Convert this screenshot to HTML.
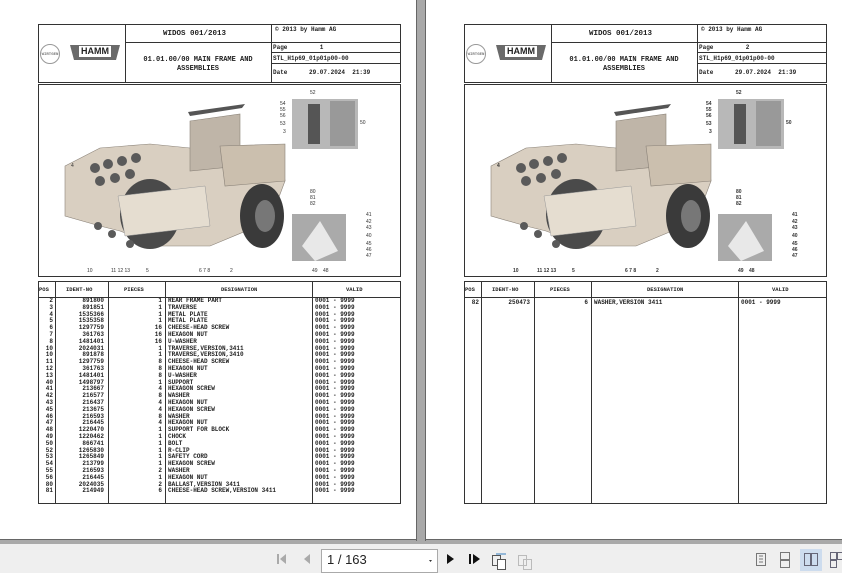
<!DOCTYPE html>
<html><head><meta charset="utf-8"><style>
*{margin:0;padding:0;box-sizing:border-box}
body{width:842px;height:573px;overflow:hidden;background:#a9a9a9;position:relative;font-family:"Liberation Mono",monospace;font-weight:bold;color:#222}
.page{position:absolute;top:0;width:417px;height:540px;background:#fff;border-bottom:1px solid #666}
.b{position:absolute;border:1px solid #333}
.t{position:absolute;font-size:7px;white-space:pre;line-height:8px}
.rows{position:absolute;top:298px;font-size:6px;line-height:6.8px;white-space:pre}
.tb{position:absolute;left:0;top:544px;width:842px;height:29px;background:#efefef}
.photo{position:absolute;left:40px;top:86px;width:358px;height:189px}
</style></head><body>

<!-- PAGE 1 -->
<div class="page" style="left:0">
 <div class="b" style="left:38px;top:24px;width:363px;height:59px"></div>
 <div class="b" style="left:125px;top:24px;width:147px;height:59px;border-top:none;border-bottom:none"></div>
 <div class="b" style="left:271px;top:42px;width:130px;height:1px;border-width:1px 0 0 0"></div>
 <div class="b" style="left:125px;top:42px;width:147px;height:1px;border-width:1px 0 0 0"></div>
 <div class="b" style="left:271px;top:52px;width:130px;height:1px;border-width:1px 0 0 0"></div>
 <div class="b" style="left:271px;top:63px;width:130px;height:1px;border-width:1px 0 0 0"></div>
 <div style="position:absolute;left:40px;top:44px;width:20px;height:20px;border:1px solid #999;border-radius:50%;font-size:4px;color:#777;text-align:center;line-height:20px">WIRTGEN</div>
 <div style="position:absolute;left:70px;top:45px;width:50px;height:15px;background:#6a6a6a;clip-path:polygon(0 0,100% 0,92% 100%,8% 100%)"></div>
 <div style="position:absolute;left:79px;top:46px;width:32px;height:11px;background:#fff;font-family:'Liberation Sans',sans-serif;font-size:9px;line-height:11px;text-align:center;color:#222">HAMM</div>
 <div class="t" style="left:163px;top:30px;font-size:7.5px">WIDOS 001/2013</div>
 <div class="t" style="left:275px;top:26px;font-size:6px">© 2013 by Hamm AG</div>
 <div class="t" style="left:131px;top:56px;text-align:center;width:134px;line-height:9px">01.01.00/00 MAIN FRAME AND
ASSEMBLIES</div>
 <div class="t" style="left:273px;top:44px;font-size:6px">Page         1</div>
 <div class="t" style="left:273px;top:55px;font-size:6px">STL_H1p69_01p01p00-00</div>
 <div class="t" style="left:273px;top:69px;font-size:6px">Date      29.07.2024  21:39</div>

 <div class="b" style="left:38px;top:84px;width:363px;height:193px"></div>
 <svg class="photo" viewBox="0 0 358 189">
  <g fill="#ccc4b8" stroke="#8a8278" stroke-width=".6">
   <path d="M25 80 L60 62 L110 58 L150 62 L160 75 L200 64 L240 60 L245 95 L230 135 L170 160 L120 160 L80 145 L60 140 L25 130 Z" fill="#d9cfc1"/>
   <path d="M150 35 L200 28 L200 80 L150 85 Z" fill="#bfb5a8"/>
   <path d="M180 60 L245 58 L245 95 L185 100 Z" fill="#cbbfae"/>
  </g>
  <path d="M148 26 L205 18 L202 22 L150 30Z" fill="#555"/>
  <ellipse cx="222" cy="130" rx="22" ry="32" fill="#3a3a3a"/>
  <ellipse cx="225" cy="130" rx="10" ry="16" fill="#777"/>
  <ellipse cx="110" cy="128" rx="30" ry="35" fill="#4a4a4a"/>
  <path d="M78 110 L165 100 L170 140 L85 150 Z" fill="#e5ddd0" stroke="#999" stroke-width=".5"/>
  <g fill="#5a5a5a"><circle cx="55" cy="82" r="5"/><circle cx="68" cy="78" r="5"/><circle cx="82" cy="75" r="5"/><circle cx="96" cy="72" r="5"/><circle cx="60" cy="95" r="5"/><circle cx="75" cy="92" r="5"/><circle cx="90" cy="88" r="5"/><circle cx="58" cy="140" r="4"/><circle cx="72" cy="148" r="4"/><circle cx="90" cy="158" r="4"/></g>
  <rect x="252" y="13" width="66" height="50" fill="#b8b8b8"/><rect x="268" y="18" width="12" height="40" fill="#555"/><rect x="290" y="15" width="25" height="45" fill="#999"/>
  <rect x="252" y="128" width="54" height="47" fill="#aaa"/><path d="M262 160 L280 135 L298 165 L275 175Z" fill="#e8e8e8"/>
  <g font-family="Liberation Sans" font-size="5" fill="#333" font-weight="normal">
   <text x="270" y="8">52</text><text x="240" y="19">54</text><text x="240" y="25">55</text><text x="240" y="31">56</text><text x="240" y="39">53</text><text x="320" y="38">50</text><text x="243" y="47">3</text>
   <text x="31" y="81">4</text><text x="270" y="107">80</text><text x="270" y="113">81</text><text x="270" y="119">82</text>
   <text x="326" y="130">41</text><text x="326" y="137">42</text><text x="326" y="143">43</text><text x="326" y="151">40</text><text x="326" y="159">45</text><text x="326" y="165">46</text><text x="326" y="171">47</text>
   <text x="47" y="186">10</text><text x="71" y="186">11 12 13</text><text x="106" y="186">5</text><text x="159" y="186">6 7 8</text><text x="190" y="186">2</text><text x="272" y="186">49</text><text x="283" y="186">48</text>
  </g>
 </svg>

 <div class="b" style="left:38px;top:281px;width:363px;height:223px"></div>
 <div class="b" style="left:38px;top:297px;width:363px;height:1px;border-width:1px 0 0 0"></div>
 <div class="b" style="left:55px;top:281px;width:1px;height:223px;border-width:0 0 0 1px"></div>
 <div class="b" style="left:108px;top:281px;width:1px;height:223px;border-width:0 0 0 1px"></div>
 <div class="b" style="left:165px;top:281px;width:1px;height:223px;border-width:0 0 0 1px"></div>
 <div class="b" style="left:312px;top:281px;width:1px;height:223px;border-width:0 0 0 1px"></div>
 <div class="t" style="left:39px;top:286px;font-size:5.5px">POS</div>
 <div class="t" style="left:66px;top:286px;font-size:5.5px">IDENT-NO</div>
 <div class="t" style="left:124px;top:286px;font-size:5.5px">PIECES</div>
 <div class="t" style="left:221px;top:286px;font-size:5.5px">DESIGNATION</div>
 <div class="t" style="left:346px;top:286px;font-size:5.5px">VALID</div>
 <div class="rows" style="left:40px;width:13px;text-align:right">2
3
4
5
6
7
8
10
10
11
12
13
40
41
42
43
45
46
47
48
49
50
52
53
54
55
56
80
81</div>
 <div class="rows" style="left:58px;width:46px;text-align:right">891800
891851
1535366
1535358
1297759
361763
1481401
2024031
891878
1297759
361763
1481401
1498797
213667
216577
216437
213675
216593
216445
1220470
1220462
866741
1265830
1265849
213799
216593
216445
2024035
214949</div>
 <div class="rows" style="left:110px;width:52px;text-align:right">1
1
1
1
16
16
16
1
1
8
8
8
1
4
8
4
4
8
4
1
1
1
1
1
1
2
1
2
6</div>
 <div class="rows" style="left:168px">REAR FRAME PART
TRAVERSE
METAL PLATE
METAL PLATE
CHEESE-HEAD SCREW
HEXAGON NUT
U-WASHER
TRAVERSE,VERSION,3411
TRAVERSE,VERSION,3410
CHEESE-HEAD SCREW
HEXAGON NUT
U-WASHER
SUPPORT
HEXAGON SCREW
WASHER
HEXAGON NUT
HEXAGON SCREW
WASHER
HEXAGON NUT
SUPPORT FOR BLOCK
CHOCK
BOLT
R-CLIP
SAFETY CORD
HEXAGON SCREW
WASHER
HEXAGON NUT
BALLAST,VERSION 3411
CHEESE-HEAD SCREW,VERSION 3411</div>
 <div class="rows" style="left:315px">0001 - 9999
0001 - 9999
0001 - 9999
0001 - 9999
0001 - 9999
0001 - 9999
0001 - 9999
0001 - 9999
0001 - 9999
0001 - 9999
0001 - 9999
0001 - 9999
0001 - 9999
0001 - 9999
0001 - 9999
0001 - 9999
0001 - 9999
0001 - 9999
0001 - 9999
0001 - 9999
0001 - 9999
0001 - 9999
0001 - 9999
0001 - 9999
0001 - 9999
0001 - 9999
0001 - 9999
0001 - 9999
0001 - 9999</div>
</div>
<div style="position:absolute;left:416px;top:0;width:1px;height:541px;background:#666"></div>
<div style="position:absolute;left:425px;top:0;width:1px;height:541px;background:#666"></div>

<!-- PAGE 2 -->
<div class="page" style="left:426px;width:416px">
 <div class="b" style="left:38px;top:24px;width:363px;height:59px"></div>
 <div class="b" style="left:125px;top:24px;width:147px;height:59px;border-top:none;border-bottom:none"></div>
 <div class="b" style="left:271px;top:42px;width:130px;height:1px;border-width:1px 0 0 0"></div>
 <div class="b" style="left:125px;top:42px;width:147px;height:1px;border-width:1px 0 0 0"></div>
 <div class="b" style="left:271px;top:52px;width:130px;height:1px;border-width:1px 0 0 0"></div>
 <div class="b" style="left:271px;top:63px;width:130px;height:1px;border-width:1px 0 0 0"></div>
 <div style="position:absolute;left:40px;top:44px;width:20px;height:20px;border:1px solid #999;border-radius:50%;font-size:4px;color:#777;text-align:center;line-height:20px">WIRTGEN</div>
 <div style="position:absolute;left:70px;top:45px;width:50px;height:15px;background:#6a6a6a;clip-path:polygon(0 0,100% 0,92% 100%,8% 100%)"></div>
 <div style="position:absolute;left:79px;top:46px;width:32px;height:11px;background:#fff;font-family:'Liberation Sans',sans-serif;font-size:9px;line-height:11px;text-align:center;color:#222">HAMM</div>
 <div class="t" style="left:163px;top:30px;font-size:7.5px">WIDOS 001/2013</div>
 <div class="t" style="left:275px;top:26px;font-size:6px">© 2013 by Hamm AG</div>
 <div class="t" style="left:131px;top:56px;text-align:center;width:134px;line-height:9px">01.01.00/00 MAIN FRAME AND
ASSEMBLIES</div>
 <div class="t" style="left:273px;top:44px;font-size:6px">Page         2</div>
 <div class="t" style="left:273px;top:55px;font-size:6px">STL_H1p69_01p01p00-00</div>
 <div class="t" style="left:273px;top:69px;font-size:6px">Date      29.07.2024  21:39</div>
 <div class="b" style="left:38px;top:84px;width:363px;height:193px"></div>
 <svg class="photo" viewBox="0 0 358 189">
  <g fill="#ccc4b8" stroke="#8a8278" stroke-width=".6">
   <path d="M25 80 L60 62 L110 58 L150 62 L160 75 L200 64 L240 60 L245 95 L230 135 L170 160 L120 160 L80 145 L60 140 L25 130 Z" fill="#d9cfc1"/>
   <path d="M150 35 L200 28 L200 80 L150 85 Z" fill="#bfb5a8"/>
   <path d="M180 60 L245 58 L245 95 L185 100 Z" fill="#cbbfae"/>
  </g>
  <path d="M148 26 L205 18 L202 22 L150 30Z" fill="#555"/>
  <ellipse cx="222" cy="130" rx="22" ry="32" fill="#3a3a3a"/>
  <ellipse cx="225" cy="130" rx="10" ry="16" fill="#777"/>
  <ellipse cx="110" cy="128" rx="30" ry="35" fill="#4a4a4a"/>
  <path d="M78 110 L165 100 L170 140 L85 150 Z" fill="#e5ddd0" stroke="#999" stroke-width=".5"/>
  <g fill="#5a5a5a"><circle cx="55" cy="82" r="5"/><circle cx="68" cy="78" r="5"/><circle cx="82" cy="75" r="5"/><circle cx="96" cy="72" r="5"/><circle cx="60" cy="95" r="5"/><circle cx="75" cy="92" r="5"/><circle cx="90" cy="88" r="5"/><circle cx="58" cy="140" r="4"/><circle cx="72" cy="148" r="4"/><circle cx="90" cy="158" r="4"/></g>
  <rect x="252" y="13" width="66" height="50" fill="#b8b8b8"/><rect x="268" y="18" width="12" height="40" fill="#555"/><rect x="290" y="15" width="25" height="45" fill="#999"/>
  <rect x="252" y="128" width="54" height="47" fill="#aaa"/><path d="M262 160 L280 135 L298 165 L275 175Z" fill="#e8e8e8"/>
  <g font-family="Liberation Sans" font-size="5" fill="#333">
   <text x="270" y="8">52</text><text x="240" y="19">54</text><text x="240" y="25">55</text><text x="240" y="31">56</text><text x="240" y="39">53</text><text x="320" y="38">50</text><text x="243" y="47">3</text>
   <text x="31" y="81">4</text><text x="270" y="107">80</text><text x="270" y="113">81</text><text x="270" y="119">82</text>
   <text x="326" y="130">41</text><text x="326" y="137">42</text><text x="326" y="143">43</text><text x="326" y="151">40</text><text x="326" y="159">45</text><text x="326" y="165">46</text><text x="326" y="171">47</text>
   <text x="47" y="186">10</text><text x="71" y="186">11 12 13</text><text x="106" y="186">5</text><text x="159" y="186">6 7 8</text><text x="190" y="186">2</text><text x="272" y="186">49</text><text x="283" y="186">48</text>
  </g>
 </svg>
 <div class="b" style="left:38px;top:281px;width:363px;height:223px"></div>
 <div class="b" style="left:38px;top:297px;width:363px;height:1px;border-width:1px 0 0 0"></div>
 <div class="b" style="left:55px;top:281px;width:1px;height:223px;border-width:0 0 0 1px"></div>
 <div class="b" style="left:108px;top:281px;width:1px;height:223px;border-width:0 0 0 1px"></div>
 <div class="b" style="left:165px;top:281px;width:1px;height:223px;border-width:0 0 0 1px"></div>
 <div class="b" style="left:312px;top:281px;width:1px;height:223px;border-width:0 0 0 1px"></div>
 <div class="t" style="left:39px;top:286px;font-size:5.5px">POS</div>
 <div class="t" style="left:66px;top:286px;font-size:5.5px">IDENT-NO</div>
 <div class="t" style="left:124px;top:286px;font-size:5.5px">PIECES</div>
 <div class="t" style="left:221px;top:286px;font-size:5.5px">DESIGNATION</div>
 <div class="t" style="left:346px;top:286px;font-size:5.5px">VALID</div>
 <div class="rows" style="left:40px;top:300px;width:13px;text-align:right">82</div>
 <div class="rows" style="left:58px;top:300px;width:46px;text-align:right">250473</div>
 <div class="rows" style="left:110px;top:300px;width:52px;text-align:right">6</div>
 <div class="rows" style="left:168px;top:300px">WASHER,VERSION 3411</div>
 <div class="rows" style="left:315px;top:300px">0001 - 9999</div>
</div>

<!-- TOOLBAR -->
<div class="tb">
 <svg width="842" height="29" style="position:absolute;left:0;top:0">
  <g fill="#aaa"><rect x="277" y="10" width="2" height="10"/><path d="M280 15 L286 10 V20Z"/><path d="M304 15 L310 10 V20Z"/></g>
  <rect x="321.5" y="5.5" width="116" height="23" fill="#fff" stroke="#aaa"/>
  <path d="M429 16 L432 16 L430.5 18Z" fill="#333"/>
  <g fill="#111"><path d="M447 10 L454 15 L447 20Z"/><rect x="469" y="10" width="2" height="10"/><path d="M473 10 L480 15 L473 20Z"/></g>
  <g stroke="#555" fill="none"><rect x="492.5" y="11.5" width="8" height="10"/><rect x="497.5" y="15.5" width="8" height="10" fill="#fff"/><path d="M496 10 L506 10" stroke="#3a80c0"/></g>
  <g stroke="#bbb" fill="none"><rect x="518.5" y="11.5" width="8" height="10"/><rect x="523.5" y="15.5" width="8" height="10"/></g>
  <g stroke="#777" fill="none"><rect x="756.5" y="9.5" width="9" height="12"/><path d="M759 12h4M759 15h4M759 18h4"/>
  <rect x="780.5" y="8.5" width="9" height="7"/><rect x="780.5" y="16.5" width="9" height="7"/></g>
  <rect x="800" y="5" width="22" height="22" fill="#cddcee"/>
  <g stroke="#667" fill="none"><rect x="804.5" y="9.5" width="6" height="12"/><rect x="811.5" y="9.5" width="6" height="12"/>
  <rect x="830.5" y="8.5" width="6" height="7"/><rect x="837.5" y="8.5" width="6" height="7"/><rect x="830.5" y="16.5" width="6" height="7"/></g>
 </svg>
 <div style="position:absolute;left:327px;top:8px;font-family:'Liberation Sans',sans-serif;font-weight:normal;font-size:13px;color:#222">1 / 163</div>
</div>
</body></html>
